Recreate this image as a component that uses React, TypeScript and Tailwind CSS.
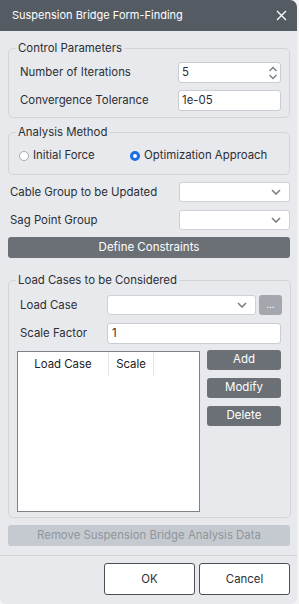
import React from 'react';

const font = { fontFamily: 'Inter, "Noto Sans", sans-serif' };

function Chevron() {
  return (
    <svg width="10" height="6" viewBox="0 0 10 6" className="text-[#7a7f86]">
      <path d="M1 1l4 4 4-4" fill="none" stroke="currentColor" strokeWidth="1.6" />
    </svg>
  );
}

function Select({ className }: { className: string }) {
  return (
    <div className={`h-[20px] bg-white border border-[#cdd0d4] rounded-[3px] flex items-center justify-end pr-[8px] ${className}`}>
      <Chevron />
    </div>
  );
}

function DarkButton({ children, className = '' }: { children: React.ReactNode; className?: string }) {
  return (
    <div className={`h-[20px] bg-[#6b7077] text-white rounded-[3px] flex items-center justify-center text-[11.5px] ${className}`}>
      {children}
    </div>
  );
}

export default function App() {
  return (
    <div className="w-[299px] h-[604px] bg-[#f3f3f3] text-[11.4px] text-[#2b2f34]" style={font}>
      <div className="w-[297px] h-[604px] bg-[#e8e9ec] rounded-tr-[7px] rounded-b-[6px] overflow-hidden flex flex-col">
        {/* title */}
        <div className="h-[31px] bg-[#555b63] flex items-center justify-between pl-[12px] pr-[10px] text-white text-[11px] shrink-0">
          <span>Suspension Bridge Form-Finding</span>
          <svg width="11" height="11" viewBox="0 0 11 11">
            <path d="M1 1l9 9M10 1l-9 9" stroke="white" strokeWidth="1.3" />
          </svg>
        </div>

        <div className="px-[8px] flex flex-col">
          {/* control parameters */}
          <fieldset className="mt-[9px] border border-[#d2d4d8] rounded-[5px] w-[282px]">
            <legend className="px-[2px] ml-[7px] leading-[16px]">Control Parameters</legend>
            <div className="flex flex-col gap-[7px] pt-[6px] pb-[6px] pl-[11px] pr-[8px]">
              <div className="flex items-center justify-between">
                <span>Number of Iterations</span>
                <div className="w-[103px] h-[21px] bg-white border border-[#c9ccd0] rounded-[3px] flex items-center justify-between pl-[3px] pr-[2px]">
                  <span>5</span>
                  <svg width="10" height="16" viewBox="0 0 10 16" className="text-[#7a7f86]">
                    <path d="M1.5 6l3.5-3.5L8.5 6M1.5 10l3.5 3.5 3.5-3.5" fill="none" stroke="currentColor" strokeWidth="1.4" />
                  </svg>
                </div>
              </div>
              <div className="flex items-center justify-between">
                <span>Convergence Tolerance</span>
                <div className="w-[103px] h-[21px] bg-white border border-[#c9ccd0] rounded-[3px] flex items-center pl-[3px]">1e-05</div>
              </div>
            </div>
          </fieldset>

          {/* analysis method */}
          <fieldset className="mt-[6px] border border-[#d2d4d8] rounded-[5px] w-[282px]">
            <legend className="px-[2px] ml-[7px] leading-[16px]">Analysis Method</legend>
            <div className="flex items-center pt-[7px] pb-[10px] pl-[10px]">
              <div className="flex items-center w-[111px]">
                <span className="w-[10px] h-[10px] rounded-full border border-[#a7abb0] bg-white mr-[4px]" />
                <span>Initial Force</span>
              </div>
              <div className="flex items-center">
                <span className="w-[10px] h-[10px] rounded-full border-[3px] border-[#1a6ee8] bg-white mr-[4px]" />
                <span>Optimization Approach</span>
              </div>
            </div>
          </fieldset>

          {/* groups */}
          <div className="mt-[7px] flex items-center justify-between pl-[2px] w-[282px]">
            <span>Cable Group to be Updated</span>
            <Select className="w-[111px]" />
          </div>
          <div className="mt-[8px] flex items-center justify-between pl-[2px] w-[282px]">
            <span>Sag Point Group</span>
            <Select className="w-[111px]" />
          </div>
          <DarkButton className="mt-[7px] w-[282px] !h-[21px]">Define Constraints</DarkButton>

          {/* load cases */}
          <fieldset className="mt-[14px] border border-[#d2d4d8] rounded-[5px] w-[282px]">
            <legend className="px-[2px] ml-[7px] leading-[16px]">Load Cases to be Considered</legend>
            <div className="pl-[8px] pr-[8px] pb-[5px]">
              <div className="flex items-center pt-[7px] pl-[3px]">
                <span className="w-[87px]">Load Case</span>
                <Select className="w-[149px]" />
                <div className="ml-[3px] w-[23px] h-[20px] bg-[#a4a8ae] rounded-[3px] text-white text-[9px] flex items-center justify-center">...</div>
              </div>
              <div className="flex items-center mt-[8px] pl-[3px]">
                <span className="w-[87px]">Scale Factor</span>
                <div className="w-[174px] h-[21px] bg-white border border-[#c9ccd0] rounded-[3px] flex items-center pl-[4px]">1</div>
              </div>
              <div className="flex mt-[7px] gap-[7px]">
                <div className="w-[183px] h-[161px] bg-white border border-[#7d8288]">
                  <div className="flex h-[24px] text-[11.4px] text-[#1d2025]">
                    <div className="w-[91px] flex items-center justify-center border-r border-[#e2e4e7]">Load Case</div>
                    <div className="w-[45px] flex items-center justify-center border-r border-[#e2e4e7]">Scale</div>
                  </div>
                </div>
                <div className="flex flex-col gap-[8px] w-[74px] -mt-[1px]">
                  <DarkButton>Add</DarkButton>
                  <DarkButton>Modify</DarkButton>
                  <DarkButton>Delete</DarkButton>
                </div>
              </div>
            </div>
          </fieldset>

          <div className="mt-[7px] w-[282px] h-[21px] bg-[#c5cad0] rounded-[3px] flex items-center justify-center text-[#8f959c] text-[11.4px]">
            Remove Suspension Bridge Analysis Data
          </div>
        </div>

        <div className="mt-[9px] border-t border-[#cfd1d5]" />
        <div className="flex justify-end gap-[4px] pr-[7px] mt-[7px]">
          <div className="w-[91px] h-[32px] bg-white border border-[#4b5056] rounded-[3px] flex items-center justify-center">OK</div>
          <div className="w-[91px] h-[32px] bg-white border border-[#4b5056] rounded-[3px] flex items-center justify-center">Cancel</div>
        </div>
      </div>
    </div>
  );
}
